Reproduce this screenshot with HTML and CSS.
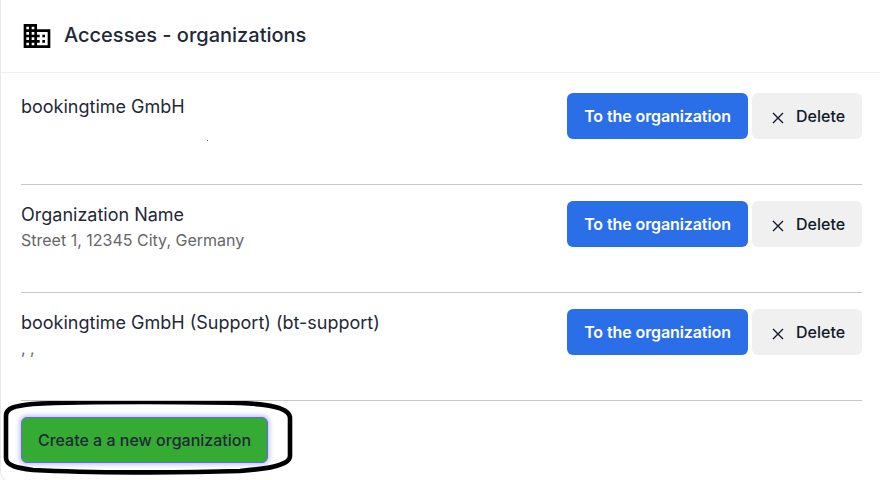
FILE: index.html
```html
<!DOCTYPE html>
<html lang="en">
<head>
  <meta charset="UTF-8" />
  <title>Accesses - organizations</title>
  <link rel="stylesheet" href="styles.css">
</head>
<body>
  <div class="card">
    <div class="card-header">
      <svg class="header-icon" width="32" height="32" viewBox="0 0 24 24">
        <path fill="#000" d="M12 7V3H2v18h20V7H12zM6 19H4v-2h2v2zm0-4H4v-2h2v2zm0-4H4V9h2v2zm0-4H4V5h2v2zm4 12H8v-2h2v2zm0-4H8v-2h2v2zm0-4H8V9h2v2zm0-4H8V5h2v2zm10 12h-8v-2h2v-2h-2v-2h2v-2h-2V9h8v10zm-2-8h-2v2h2v-2zm0 4h-2v2h2v-2z"/>
      </svg>
      <h2>Accesses - organizations</h2>
    </div>

    <div class="org-list">
      <div class="org-row">
        <div class="org-info">
          <div class="org-name">bookingtime GmbH</div>
          <div class="org-address"><span class="speck"></span></div>
        </div>
        <div class="org-actions">
          <button class="btn btn-primary">To the organization</button>
          <button class="btn btn-light">
            <svg width="12" height="12" viewBox="0 0 12 12"><path d="M1 1l10 10M11 1L1 11" stroke="#111827" stroke-width="1.4" fill="none"/></svg>
            Delete
          </button>
        </div>
      </div>

      <div class="org-row">
        <div class="org-info">
          <div class="org-name">Organization Name</div>
          <div class="org-address">Street 1, 12345 City, Germany</div>
        </div>
        <div class="org-actions">
          <button class="btn btn-primary">To the organization</button>
          <button class="btn btn-light">
            <svg width="12" height="12" viewBox="0 0 12 12"><path d="M1 1l10 10M11 1L1 11" stroke="#111827" stroke-width="1.4" fill="none"/></svg>
            Delete
          </button>
        </div>
      </div>

      <div class="org-row">
        <div class="org-info">
          <div class="org-name">bookingtime GmbH (Support) (bt-support)</div>
          <div class="org-address">, ,</div>
        </div>
        <div class="org-actions">
          <button class="btn btn-primary">To the organization</button>
          <button class="btn btn-light">
            <svg width="12" height="12" viewBox="0 0 12 12"><path d="M1 1l10 10M11 1L1 11" stroke="#111827" stroke-width="1.4" fill="none"/></svg>
            Delete
          </button>
        </div>
      </div>
    </div>

    <div class="card-footer">
      <button class="btn btn-create">Create a a new organization</button>
      <svg class="scribble" width="296" height="79" viewBox="0 401 296 79">
        <path d="M6 416 C6 408 14 406 33 404 C90 401 200 402 240 403 C265 404 290 407 290 418 L290 456 C290 466 265 469 240 471 C180 473 90 473 33 470 C18 468 6 466 6 458 Z" fill="none" stroke="#000" stroke-width="4.6"/>
      </svg>
    </div>
  </div>
</body>
</html>
```

FILE: styles.css
```css
html, body {
  height: 480px;
  overflow: hidden;
}
body {
  margin: 0;
  font-family: Inter, 'Noto Sans', sans-serif;
  background-color: #fff;
  color: #1f2937;
}
.card {
  width: 880px;
  height: 482px;
  box-sizing: border-box;
  border-left: 1px solid #e8e8e8;
  border-bottom: 1px solid #e8e8e8;
  border-bottom-left-radius: 10px;
}
.card-header {
  display: flex;
  align-items: center;
  gap: 11px;
  height: 73px;
  box-sizing: border-box;
  padding-left: 20px;
  border-bottom: 1px solid #eeeeee;
}
.card-header h2 {
  margin: 0 0 2px;
  font-size: 20px;
  font-weight: 500;
  color: #1f2937;
}
.org-list {
  padding: 20px 18px 0 20px;
}
.org-row {
  display: flex;
  justify-content: space-between;
  box-sizing: border-box;
  height: 92px;
  margin-bottom: 16px;
  border-bottom: 1px solid #c8c8c8;
}
.org-row:last-child {
  margin-bottom: 0;
}
.org-name {
  margin-top: 2px;
  font-size: 18px;
  line-height: 24px;
}
.org-address {
  position: relative;
  font-size: 16px;
  line-height: 26px;
  color: #666;
}
.speck {
  position: absolute;
  left: 186px;
  top: 21px;
  width: 1px;
  height: 1px;
  background-color: #555;
}
.org-actions {
  display: flex;
  gap: 4px;
  height: 46px;
}
.btn {
  height: 46px;
  border: none;
  border-radius: 6px;
  font-family: inherit;
  font-size: 16px;
  cursor: pointer;
}
.btn-primary {
  width: 181px;
  background-color: #2a6fe8;
  color: #fff;
  font-weight: 600;
  letter-spacing: -0.1px;
}
.btn-light {
  display: flex;
  align-items: center;
  gap: 12px;
  width: 110px;
  padding: 0 0 0 20px;
  background-color: #f0f0f0;
  color: #111827;
  font-weight: 500;
}
.btn-light svg {
  margin-top: 3px;
}
.card-footer {
  position: relative;
  padding: 16px 0 0 20px;
}
.btn-create {
  width: 247px;
  height: 46px;
  background-color: #36ab33;
  color: #1f2937;
  font-weight: 500;
  border: 1px solid #6366f1;
  box-shadow: 0 0 4px 2px #c7c7fe;
}
.scribble {
  position: absolute;
  left: -1px;
  top: 0;
  pointer-events: none;
}
```
